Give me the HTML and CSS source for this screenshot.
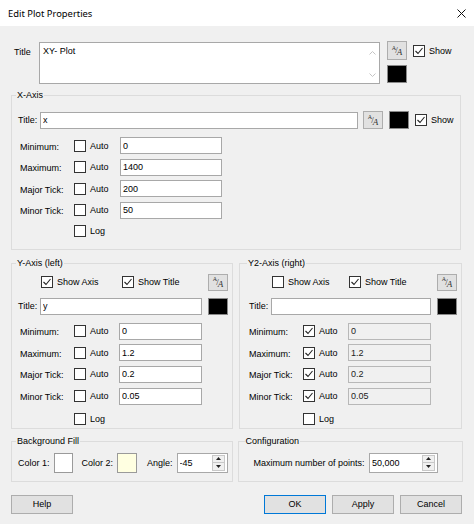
FILE: index.html
```html
<!DOCTYPE html>
<html lang="en">
<head>
  <meta charset="UTF-8">
  <title>Edit Plot Properties</title>
  <link rel="stylesheet" href="styles.css">
</head>
<body>

<div class="window">
  <div class="titlebar">
    <span class="caption">Edit Plot Properties</span>
    <svg class="close" width="9" height="9" viewBox="0 0 9 9"><path d="M0.5 0.5L8.5 8.5M8.5 0.5L0.5 8.5" stroke="#111" stroke-width="1"/></svg>
  </div>

  <div class="content">

    <!-- plot title -->
    <div class="plot-title">
      <span class="plot-title-label">Title</span>
      <div class="memo">
        <span class="memo-text">XY- Plot</span>
        <div class="memo-scroll">
          <svg width="7" height="5" viewBox="0 0 7 5"><path d="M0.5 4.5L3.5 1.5L6.5 4.5" fill="none" stroke="#c4c4c4"/></svg>
          <svg width="7" height="5" viewBox="0 0 7 5"><path d="M0.5 0.5L3.5 3.5L6.5 0.5" fill="none" stroke="#c4c4c4"/></svg>
        </div>
      </div>
      <div class="plot-title-side">
        <div class="side-top">
          <button class="font-btn"><span class="fa-small">A</span><span class="fa-slash">/</span><span class="fa-big">A</span></button>
          <label class="check"><span class="box on"><svg width="10" height="10" viewBox="0 0 10 10"><path d="M1.5 5L4 7.5L8.5 2" fill="none" stroke="#222" stroke-width="1.1"/></svg></span>Show</label>
        </div>
        <span class="swatch swatch-black"></span>
      </div>
    </div>

    <!-- x axis -->
    <div class="group group-x">
      <div class="legend">X-Axis</div>
      <div class="axis-title">
        <span class="axis-title-label">Title:</span>
        <input class="field x-title-field" value="x">
        <button class="font-btn"><span class="fa-small">A</span><span class="fa-slash">/</span><span class="fa-big">A</span></button>
        <span class="swatch swatch-black"></span>
        <label class="check"><span class="box on"><svg width="10" height="10" viewBox="0 0 10 10"><path d="M1.5 5L4 7.5L8.5 2" fill="none" stroke="#222" stroke-width="1.1"/></svg></span>Show</label>
      </div>
      <div class="ranges">
        <div class="range-row"><span class="range-label">Minimum:</span><label class="check range-auto"><span class="box"></span>Auto</label><input class="field range-field" value="0"></div>
        <div class="range-row"><span class="range-label">Maximum:</span><label class="check range-auto"><span class="box"></span>Auto</label><input class="field range-field" value="1400"></div>
        <div class="range-row"><span class="range-label">Major Tick:</span><label class="check range-auto"><span class="box"></span>Auto</label><input class="field range-field" value="200"></div>
        <div class="range-row"><span class="range-label">Minor Tick:</span><label class="check range-auto"><span class="box"></span>Auto</label><input class="field range-field" value="50"></div>
        <div class="range-row log-row"><span class="range-label"></span><label class="check"><span class="box"></span>Log</label></div>
      </div>
    </div>

    <!-- y axes -->
    <div class="pair">
      <div class="group group-y">
        <div class="legend">Y-Axis (left)</div>
        <div class="show-row">
          <label class="check show-axis"><span class="box on"><svg width="10" height="10" viewBox="0 0 10 10"><path d="M1.5 5L4 7.5L8.5 2" fill="none" stroke="#222" stroke-width="1.1"/></svg></span>Show Axis</label>
          <label class="check"><span class="box on"><svg width="10" height="10" viewBox="0 0 10 10"><path d="M1.5 5L4 7.5L8.5 2" fill="none" stroke="#222" stroke-width="1.1"/></svg></span>Show Title</label>
          <button class="font-btn font-btn-small"><span class="fa-small">A</span><span class="fa-slash">/</span><span class="fa-big">A</span></button>
        </div>
        <div class="axis-title">
          <span class="axis-title-label">Title:</span>
          <input class="field y-title-field" value="y">
          <span class="swatch swatch-black swatch-small"></span>
        </div>
        <div class="ranges">
          <div class="range-row"><span class="range-label">Minimum:</span><label class="check range-auto"><span class="box"></span>Auto</label><input class="field range-field" value="0"></div>
          <div class="range-row"><span class="range-label">Maximum:</span><label class="check range-auto"><span class="box"></span>Auto</label><input class="field range-field" value="1.2"></div>
          <div class="range-row"><span class="range-label">Major Tick:</span><label class="check range-auto"><span class="box"></span>Auto</label><input class="field range-field" value="0.2"></div>
          <div class="range-row"><span class="range-label">Minor Tick:</span><label class="check range-auto"><span class="box"></span>Auto</label><input class="field range-field" value="0.05"></div>
          <div class="range-row log-row"><span class="range-label"></span><label class="check"><span class="box"></span>Log</label></div>
        </div>
      </div>

      <div class="group group-y group-y2">
        <div class="legend">Y2-Axis (right)</div>
        <div class="show-row">
          <label class="check show-axis"><span class="box"></span>Show Axis</label>
          <label class="check"><span class="box on"><svg width="10" height="10" viewBox="0 0 10 10"><path d="M1.5 5L4 7.5L8.5 2" fill="none" stroke="#222" stroke-width="1.1"/></svg></span>Show Title</label>
          <button class="font-btn font-btn-small"><span class="fa-small">A</span><span class="fa-slash">/</span><span class="fa-big">A</span></button>
        </div>
        <div class="axis-title">
          <span class="axis-title-label">Title:</span>
          <input class="field y-title-field" value="">
          <span class="swatch swatch-black swatch-small"></span>
        </div>
        <div class="ranges">
          <div class="range-row"><span class="range-label">Minimum:</span><label class="check range-auto"><span class="box on"><svg width="10" height="10" viewBox="0 0 10 10"><path d="M1.5 5L4 7.5L8.5 2" fill="none" stroke="#222" stroke-width="1.1"/></svg></span>Auto</label><input class="field range-field" value="0" disabled></div>
          <div class="range-row"><span class="range-label">Maximum:</span><label class="check range-auto"><span class="box on"><svg width="10" height="10" viewBox="0 0 10 10"><path d="M1.5 5L4 7.5L8.5 2" fill="none" stroke="#222" stroke-width="1.1"/></svg></span>Auto</label><input class="field range-field" value="1.2" disabled></div>
          <div class="range-row"><span class="range-label">Major Tick:</span><label class="check range-auto"><span class="box on"><svg width="10" height="10" viewBox="0 0 10 10"><path d="M1.5 5L4 7.5L8.5 2" fill="none" stroke="#222" stroke-width="1.1"/></svg></span>Auto</label><input class="field range-field" value="0.2" disabled></div>
          <div class="range-row"><span class="range-label">Minor Tick:</span><label class="check range-auto"><span class="box on"><svg width="10" height="10" viewBox="0 0 10 10"><path d="M1.5 5L4 7.5L8.5 2" fill="none" stroke="#222" stroke-width="1.1"/></svg></span>Auto</label><input class="field range-field" value="0.05" disabled></div>
          <div class="range-row log-row"><span class="range-label"></span><label class="check"><span class="box"></span>Log</label></div>
        </div>
      </div>
    </div>

    <!-- background + configuration -->
    <div class="pair pair-bottom">
      <div class="group group-fill">
        <div class="legend">Background Fill</div>
        <div class="fill-row">
          <span>Color 1:</span>
          <span class="swatch swatch-white"></span>
          <span class="color2-label">Color 2:</span>
          <span class="swatch swatch-cream"></span>
          <span class="angle-label">Angle:</span>
          <div class="spin angle-spin">
            <input class="spin-field" value="-45">
            <span class="spin-btns">
              <span class="spin-btn"><svg width="5" height="3" viewBox="0 0 5 3"><path d="M0 3L2.5 0L5 3Z" fill="#222"/></svg></span>
              <span class="spin-btn"><svg width="5" height="3" viewBox="0 0 5 3"><path d="M0 0L2.5 3L5 0Z" fill="#222"/></svg></span>
            </span>
          </div>
        </div>
      </div>

      <div class="group group-config">
        <div class="legend">Configuration</div>
        <div class="fill-row config-row">
          <span>Maximum number of points:</span>
          <div class="spin points-spin">
            <input class="spin-field" value="50,000">
            <span class="spin-btns">
              <span class="spin-btn"><svg width="5" height="3" viewBox="0 0 5 3"><path d="M0 3L2.5 0L5 3Z" fill="#222"/></svg></span>
              <span class="spin-btn"><svg width="5" height="3" viewBox="0 0 5 3"><path d="M0 0L2.5 3L5 0Z" fill="#222"/></svg></span>
            </span>
          </div>
        </div>
      </div>
    </div>

    <!-- dialog buttons -->
    <div class="buttons">
      <button class="btn">Help</button>
      <div class="buttons-right">
        <button class="btn btn-default">OK</button>
        <button class="btn">Apply</button>
        <button class="btn">Cancel</button>
      </div>
    </div>

  </div>
</div>

</body>
</html>
```

FILE: styles.css
```css
body { margin: 0; background-color: #f0f0f0; font: 9px "Liberation Sans", Arial, sans-serif; color: #000; }
button, input { font: inherit; color: inherit; margin: 0; }

.window { width: 474px; height: 524px; background-color: #f0f0f0; overflow: hidden; }

.titlebar {
  height: 26px;
  background-color: #fff;
  display: flex;
  align-items: center;
  justify-content: space-between;
  padding: 0 8px;
  font-family: "Noto Sans", "Open Sans", sans-serif;
  font-size: 9.4px;
}
.close { margin-top: 1px; }

.content { padding: 15px 11px 0 11px; }

/* plot title */
.plot-title { display: flex; height: 42px; }
.plot-title-label { width: 25px; padding: 6px 0 0 3px; }
.memo {
  width: 339px;
  height: 40px;
  margin-top: 1px;
  background-color: #fff;
  border: 1px solid #a8a8a8;
  display: flex;
}
.memo-text { flex: 1; padding: 3px 3px; }
.memo-scroll {
  width: 14px;
  display: flex;
  flex-direction: column;
  justify-content: space-between;
  align-items: center;
  padding: 7px 0 5px;
}
.plot-title-side { margin-left: 7px; display: flex; flex-direction: column; }
.side-top { display: flex; align-items: center; gap: 6px; }
.plot-title-side .swatch { margin-top: 5px; height: 18px; }

/* shared controls */
.font-btn {
  width: 20px;
  height: 19px;
  padding: 0;
  background-color: #e1e1e1;
  border: 1px solid #adadad;
  font-family: "Liberation Serif", serif;
  color: #333;
  display: flex;
  align-items: center;
  justify-content: center;
  line-height: 1;
}
.fa-small { font-size: 6px; margin-top: -6px; }
.fa-slash { font-size: 9px; margin: 0 -1px; }
.fa-big { font-size: 9px; font-style: italic; margin-top: 4px; }
.font-btn-small { height: 17px; }

.swatch { display: inline-block; width: 20px; height: 18px; box-sizing: border-box; border: 1px solid #8a8a8a; }
.swatch-black { background-color: #000; }
.swatch-small { height: 17px; }
.swatch-white { background-color: #fff; border-color: #9a9a9a; width: 20px; height: 20px; }
.swatch-cream { background-color: #ffffe1; border-color: #9a9a9a; width: 20px; height: 20px; }

.check { display: inline-flex; align-items: center; gap: 4px; }
.box {
  width: 12px;
  height: 12px;
  box-sizing: border-box;
  border: 1px solid #333;
  background-color: #fff;
  display: inline-flex;
  align-items: center;
  justify-content: center;
}

.field {
  height: 17px;
  box-sizing: border-box;
  border: 1px solid #a8a8a8;
  background-color: #fff;
  padding: 0 2px;
  outline: none;
}
.field[disabled] { background-color: #f0f0f0; border-color: #b8b8b8; color: #222; -webkit-text-fill-color: #222; }

/* group boxes */
.group { border: 1px solid #dcdcdc; box-sizing: border-box; padding: 0 4px 0 6px; }
.legend {
  display: table;
  margin: -7px 0 0 -2px;
  padding: 0 1px;
  line-height: 13px;
  background-color: #f0f0f0;
}

.group-x { width: 450px; margin-top: 12px; padding-bottom: 11px; }
.axis-title { display: flex; align-items: center; height: 18px; }
.axis-title-label { width: 22px; }
.group-x .axis-title { margin-top: 9px; }
.x-title-field { width: 318px; }
.group-x .axis-title .font-btn { margin-left: 5px; height: 18px; }
.group-x .axis-title .swatch { margin-left: 6px; }
.group-x .axis-title .check { margin-left: 6px; }

.ranges { margin-top: 8px; padding-left: 2px; display: flex; flex-direction: column; gap: 4.67px; }
.range-row { display: flex; align-items: center; height: 17px; }
.range-label { width: 54px; padding-top: 2px; }
.range-auto { width: 46px; }
.range-field { width: 102px; }
.log-row { height: 13px; margin-top: 1px; }

.pair { display: flex; gap: 6px; margin-top: 13px; }
.group-y { width: 222px; height: 166px; }
.group-y2 { width: 223px; padding-left: 9px; }
.group-y .range-auto { width: 45px; }
.group-y .range-field { width: 83px; }
.group-y2 .ranges { padding-left: 0; }
.group-y2 .show-row { padding-left: 23px; }

.show-row { display: flex; align-items: center; margin-top: 4px; padding-left: 23px; height: 17px; }
.show-axis { width: 81px; }
.group-y2 .show-axis { width: 77px; }
.show-row .font-btn { margin-left: auto; }
.group-y .axis-title { margin-top: 7px; height: 17px; }
.y-title-field { width: 162px; }
.group-y .axis-title .swatch { margin-left: 6px; }
.group-y2 .y-title-field { width: 160px; }
.group-y .ranges { margin-top: 8px; }
.group-y .log-row { margin-top: 3px; }

/* background fill / configuration */
.pair-bottom { margin-top: 12px; gap: 5px; }
.group-fill { width: 222px; height: 41px; }
.group-config { width: 226px; height: 41px; padding-left: 15px; }
.group-config .legend { margin-left: -9px; }
.fill-row { display: flex; align-items: center; gap: 4px; margin-top: 5px; height: 20px; }
.color2-label { margin-left: 4px; }
.angle-label { margin-left: 6px; }
.config-row { gap: 0; justify-content: space-between; padding-right: 20px; }

.spin {
  height: 20px;
  box-sizing: border-box;
  border: 1px solid #a8a8a8;
  background-color: #fff;
  display: flex;
  align-items: center;
}
.angle-spin { width: 51px; }
.points-spin { width: 69px; }
.spin-field { flex: 1; min-width: 0; border: none; background: transparent; padding: 0 2px; outline: none; }
.spin-btns {
  width: 11px;
  height: 14px;
  margin-right: 2px;
  border: 1px solid #c8c8c8;
  background-color: #f0f0f0;
  display: flex;
  flex-direction: column;
}
.spin-btn { flex: 1; display: flex; align-items: center; justify-content: center; }
.spin-btn + .spin-btn { border-top: 1px solid #c8c8c8; }

/* dialog buttons */
.buttons { display: flex; justify-content: space-between; margin-top: 13px; width: 451px; }
.buttons-right { display: flex; gap: 6px; }
.btn {
  width: 62px;
  height: 19px;
  padding: 0;
  background-color: #e1e1e1;
  border: 1px solid #adadad;
}
.btn-default { border-color: #0078d7; }
```
